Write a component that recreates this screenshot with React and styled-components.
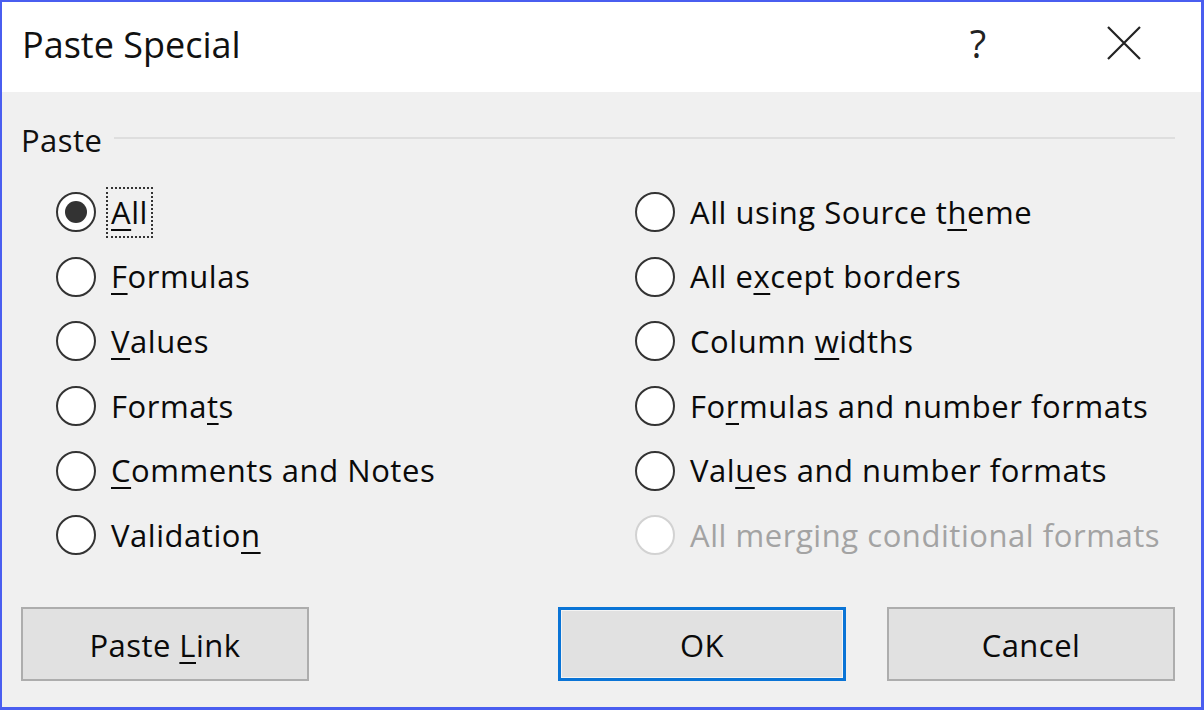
import React from "react";
import styled, { createGlobalStyle } from "styled-components";

const Global = createGlobalStyle`
  html, body { margin: 0; padding: 0; background: #ffffff; }
  body { font-family: "Open Sans", "Noto Sans", "Liberation Sans", sans-serif; color: #000; }
  * { box-sizing: border-box; }
`;

const Window = styled.div`
  width: 1204px;
  height: 710px;
  border-style: solid;
  border-color: #4a5ef0;
  border-width: 2px 3px 3px 2px;
  display: flex;
  flex-direction: column;
  background: #f0f0f0;
`;

const TitleBar = styled.div`
  height: 90px;
  background: #ffffff;
  display: flex;
  align-items: center;
  padding-left: 20px;
  flex-shrink: 0;
`;

const Title = styled.div`
  font-size: 36px;
  letter-spacing: 0;
  color: #111;
  flex: 1;
  margin-top: -6px;
`;

const HelpGlyph = styled.div`
  width: 40px;
  text-align: center;
  font-size: 38px;
  color: #222;
  margin-right: 106px;
  margin-top: -8px;
`;

const CloseButton = styled.div`
  width: 40px;
  height: 40px;
  display: flex;
  align-items: center;
  justify-content: center;
  margin-right: 57px;
  margin-top: -8px;
`;

const Body = styled.div`
  flex: 1;
  padding: 32px 26px 0 19px;
  display: flex;
  flex-direction: column;
`;

const GroupHeader = styled.div`
  display: flex;
  align-items: center;
  height: 32px;
  gap: 12px;
`;

const GroupLabel = styled.div`
  font-size: 31px;
  letter-spacing: 0.45px;
  color: #111;
`;

const GroupLine = styled.div`
  flex: 1;
  height: 2px;
  background: #dedede;
  margin-top: -4px;
`;

const OptionGrid = styled.div`
  display: grid;
  grid-template-columns: 579px 1fr;
  grid-auto-flow: column;
  grid-template-rows: repeat(6, 64.6px);
  margin-top: 24px;
  padding-left: 35px;
`;

const Option = styled.div`
  display: flex;
  align-items: center;
  gap: 13px;
`;

const Circle = styled.div`
  width: 40px;
  height: 40px;
  border-radius: 50%;
  border: 2.5px solid ${(p) => (p.$disabled ? "#d2d2d2" : "#333333")};
  background: #ffffff;
  display: flex;
  align-items: center;
  justify-content: center;
  flex-shrink: 0;
`;

const Dot = styled.div`
  width: 22px;
  height: 22px;
  border-radius: 50%;
  background: #333333;
`;

const Label = styled.span`
  font-size: 31px;
  letter-spacing: 0.55px;
  color: ${(p) => (p.$disabled ? "#a3a3a3" : "#0a0a0a")};
  white-space: nowrap;
  padding: 3px 3px;
  margin-left: -3px;
  border: 2px dotted ${(p) => (p.$focused ? "#333" : "transparent")};
  line-height: 41px;
  u {
    text-decoration-thickness: 2px;
    text-underline-offset: 5px;
  }
`;

const ButtonRow = styled.div`
  display: flex;
  margin-top: 39px;
  gap: 41px;
`;

const Button = styled.div`
  width: 288px;
  height: 74px;
  background: #e1e1e1;
  border: ${(p) => (p.$default ? "3px solid #0a74d6" : "2px solid #adadad")};
  box-shadow: ${(p) => (p.$default ? "inset 0 0 0 1px #f4f4f4" : "none")};
  display: flex;
  align-items: center;
  justify-content: center;
  font-size: 31px;
  letter-spacing: 0.45px;
  color: #0a0a0a;
  padding-top: 2px;
  margin-left: ${(p) => p.$offset || 0}px;
  u {
    text-decoration-thickness: 2px;
    text-underline-offset: 5px;
  }
`;

const left = [
  { label: <><u>A</u>ll</>, checked: true },
  { label: <><u>F</u>ormulas</> },
  { label: <><u>V</u>alues</> },
  { label: <>Forma<u>t</u>s</> },
  { label: <><u>C</u>omments and Notes</> },
  { label: <>Validatio<u>n</u></> },
];

const right = [
  { label: <>All using Source t<u>h</u>eme</> },
  { label: <>All e<u>x</u>cept borders</> },
  { label: <>Column <u>w</u>idths</> },
  { label: <>Fo<u>r</u>mulas and number formats</> },
  { label: <>Val<u>u</u>es and number formats</> },
  { label: <>All merging conditional formats</>, disabled: true },
];

function Radio({ item }) {
  return (
    <Option>
      <Circle $disabled={item.disabled}>{item.checked && <Dot />}</Circle>
      <Label $disabled={item.disabled} $focused={item.checked}>
        {item.label}
      </Label>
    </Option>
  );
}

export default function App() {
  return (
    <>
      <Global />
      <Window>
        <TitleBar>
          <Title>Paste Special</Title>
          <HelpGlyph>?</HelpGlyph>
          <CloseButton>
            <svg width="34" height="34" viewBox="0 0 34 34">
              <path d="M1 1 L33 33 M33 1 L1 33" stroke="#222" strokeWidth="2.2" />
            </svg>
          </CloseButton>
        </TitleBar>
        <Body>
          <GroupHeader>
            <GroupLabel>Paste</GroupLabel>
            <GroupLine />
          </GroupHeader>
          <OptionGrid>
            {left.map((it, i) => (
              <Radio key={"l" + i} item={it} />
            ))}
            {right.map((it, i) => (
              <Radio key={"r" + i} item={it} />
            ))}
          </OptionGrid>
          <ButtonRow>
            <Button>
              Paste&nbsp;<u>L</u>ink
            </Button>
            <Button $default $offset={208}>OK</Button>
            <Button>Cancel</Button>
          </ButtonRow>
        </Body>
      </Window>
    </>
  );
}
